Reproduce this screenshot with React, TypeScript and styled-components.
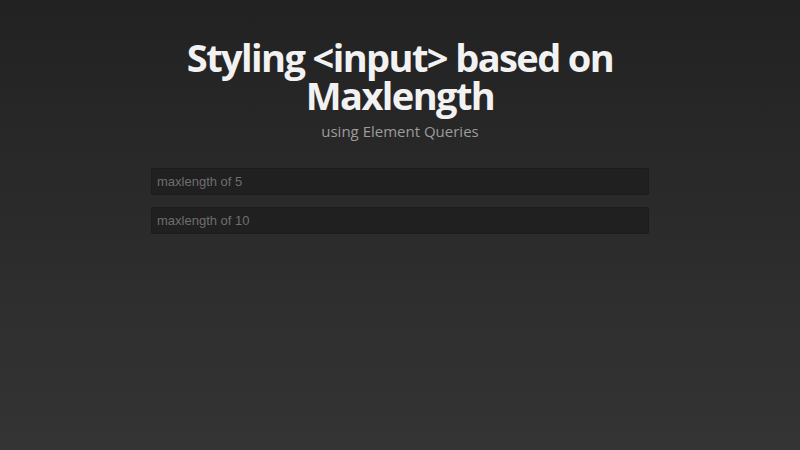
import React from "react";
import styled, { createGlobalStyle } from "styled-components";

const GlobalStyle = createGlobalStyle`
  html, body {
    margin: 0;
    height: 100%;
  }
  body {
    background: linear-gradient(to bottom, #222222 0%, #343434 100%);
    background-attachment: fixed;
    min-height: 450px;
    font-family: "Open Sans", "Liberation Sans", sans-serif;
  }
`;

const Page = styled.div`
  display: flex;
  flex-direction: column;
  align-items: center;
  padding: 38px 0 0;
`;

const Title = styled.h1`
  margin: 0;
  width: 500px;
  text-align: center;
  font-family: "Open Sans", sans-serif;
  font-weight: 700;
  font-size: 38px;
  line-height: 38px;
  letter-spacing: -1.6px;
  color: #f2f2f2;
`;

const Subtitle = styled.p`
  margin: 7px 0 0;
  font-family: "Open Sans", sans-serif;
  font-weight: 400;
  font-size: 15px;
  line-height: 20px;
  color: #9c9c9c;
`;

const Form = styled.form`
  display: flex;
  flex-direction: column;
  gap: 12px;
  margin-top: 27px;
  width: 498px;
`;

const Field = styled.input`
  box-sizing: border-box;
  width: 100%;
  height: 27px;
  padding: 0 5px;
  border: 1px solid #1c1c1c;
  border-radius: 2px;
  background: #202020;
  color: #ccc;
  font-family: "Liberation Sans", Arial, sans-serif;
  font-size: 13px;
  outline: none;

  &::placeholder {
    color: #6e6e6e;
  }
`;

export default function App() {
  return (
    <>
      <GlobalStyle />
      <Page>
        <Title>Styling &lt;input&gt; based on Maxlength</Title>
        <Subtitle>using Element Queries</Subtitle>
        <Form>
          <Field maxLength={5} placeholder="maxlength of 5" />
          <Field maxLength={10} placeholder="maxlength of 10" />
        </Form>
      </Page>
    </>
  );
}
